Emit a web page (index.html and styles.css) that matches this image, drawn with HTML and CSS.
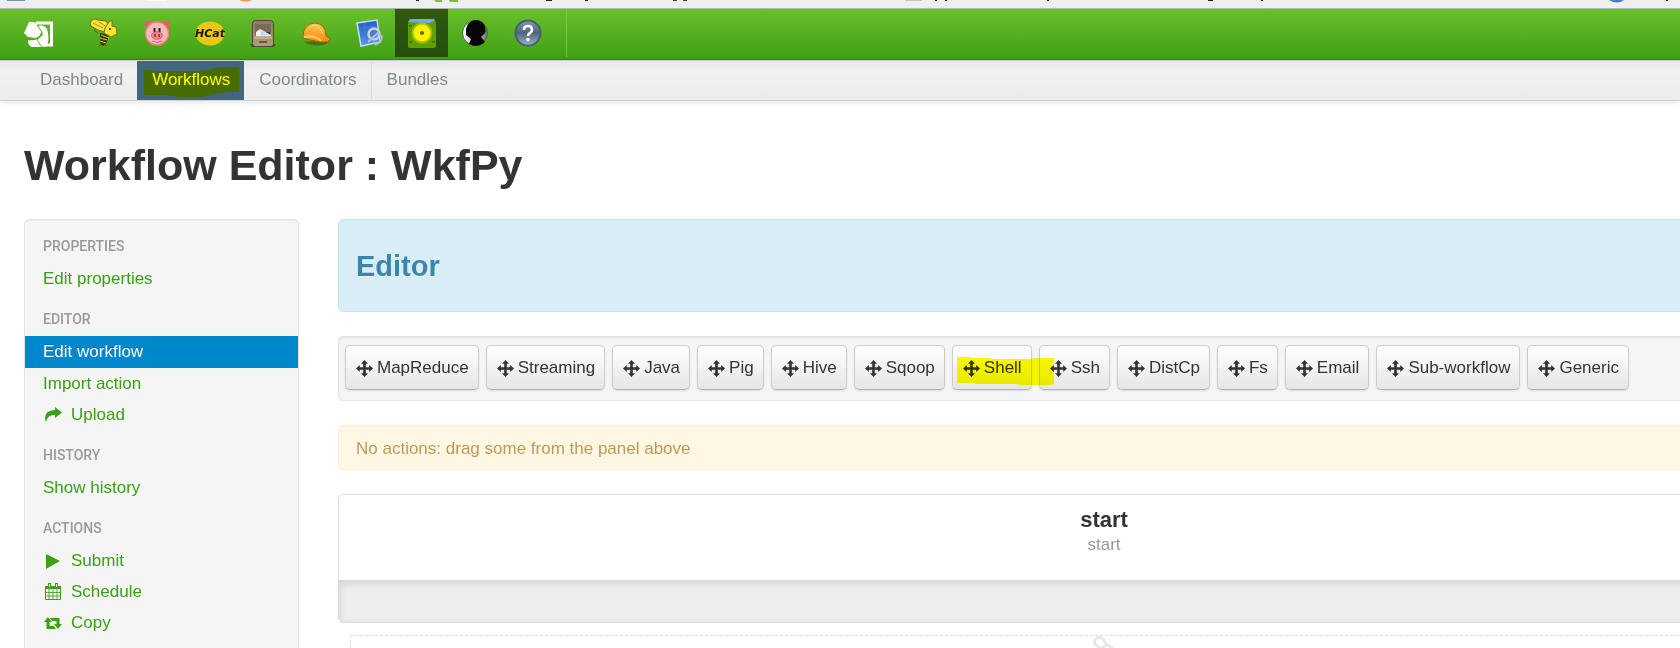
FILE: index.html
```
<!DOCTYPE html>
<html lang="en">
<head>
<meta charset="utf-8">
<title>Workflow Editor : WkfPy</title>
<link rel="stylesheet" href="styles.css">
</head>
<body>
<svg width="0" height="0" class="defs" aria-hidden="true">
  <defs>
    <linearGradient id="blue" x1="0" y1="0" x2="0" y2="1"><stop offset="0" stop-color="#1f5fc6"/><stop offset="1" stop-color="#5b97ea"/></linearGradient>
    <linearGradient id="hat" x1="0" y1="0" x2="0" y2="1"><stop offset="0" stop-color="#ffc65a"/><stop offset="1" stop-color="#f58a07"/></linearGradient>
    <linearGradient id="help" x1="0" y1="0" x2="0" y2="1"><stop offset="0" stop-color="#8797a8"/><stop offset=".5" stop-color="#4d6580"/><stop offset="1" stop-color="#9fb6c6"/></linearGradient>
    <linearGradient id="cab" x1="0" y1="0" x2="0" y2="1"><stop offset="0" stop-color="#8d7d66"/><stop offset="1" stop-color="#b09c7d"/></linearGradient>
    <linearGradient id="moon" x1="0" y1="0" x2="1" y2="0"><stop offset="0" stop-color="#fff"/><stop offset="1" stop-color="#777"/></linearGradient>
    <symbol id="move" viewBox="0 0 17 17"><path d="M8.500 0 L12 3.800 H9.800 V7.200 H13.200 V5 L17 8.500 L13.200 12 V9.800 H9.800 V13.200 H12 L8.500 17 L5 13.200 H7.200 V9.800 H3.800 V12 L0 8.500 L3.800 5 V7.200 H7.200 V3.800 H5 Z" fill="currentColor"/></symbol>
  </defs>
</svg>
<div class="browser-strip" aria-hidden="true">
  <svg width="1680" height="8" viewBox="0 0 1680 8">
    <path d="M7 0h18v1H7z" fill="#7493ad"/><path d="M148 0h19v1h-19z" fill="#fff"/><path d="M239 0h13q-6 3-13 0z" fill="#f4915c"/>
    <path d="M416 0h3v1h-3zM546 0h6v1h-6zM585 0h3v1h-3z" fill="#222"/>
    <path d="M434 0h8v2h-6zM449 0h9v2h-8z" fill="#79c043"/><path d="M673 0h4v1h-4zM683 0h4v1h-4z" fill="#444"/>
    <path d="M905 0h17v1h-17z" fill="#c4c7ca"/><path d="M935 0h2v1h-2zM945 0h2v1h-2zM1047 0h2v1h-2zM1208 0h5v1h-5zM1261 0h2v1h-2zM1666 0h2v1h-2z" fill="#222"/>
    <path d="M1609 0h15q-7 5-15 0z" fill="#4a7dbd"/>
  </svg>
</div>
<nav class="topbar" aria-label="Applications">
  <a class="brand" href="#" aria-label="Hue home">
    <svg width="30" height="28" viewBox="0 0 30 28"><path d="M12 2H27.500V24H20" fill="none" stroke="#fff" stroke-width="3"/><path d="M5 1 Q8 0 12 2 L17 10 Q17 15 12 17 L4 16 L0 12 Z" fill="#fff"/><path d="M14 5 Q20 3 23 8 Q26 17 23 25 L19 26 Q14 22 14 18 L19 14 Z" fill="#fff"/><path d="M4 19 Q10 20 13 18 Q14 23 18 26 H8 Q4 25 4 19Z" fill="#fff"/><path d="M13 4 L18 11 Q18 16 12 18 L4 17" fill="none" stroke="#58b320"/></svg>
  </a>
  <a class="app" href="#" aria-label="Hive"><svg width="30" height="30" viewBox="0 0 30 30"><path d="M11 15l9 2-2 7-4 4-3-3z" fill="#3b3308"/><path d="M11 20l7 2M11 23l6 2M12 17l8 3" stroke="#e5cb28" stroke-width="1"/><path d="M1 5Q4-1 9 2L17 3 21 8 16 14 9 12Q5 10 2 8Z" fill="#f6e338" stroke="#756916"/><path d="M16 10L20 4 23 2 23 8 27 9 28 16 22 19 15 15Z" fill="#fae62d" stroke="#7d6e12"/><path d="M4 5L14 10M10 4L18 9" stroke="#a89722"/><circle cx="21" cy="11" r="1" fill="#222"/><path d="M5 12l4 3M14 25l-4 3M16 25l1 3" stroke="#56500f"/></svg></a>
  <a class="app" href="#" aria-label="Pig"><svg width="30" height="30" viewBox="0 0 30 30"><path d="M2 3l9 1-7 7zM28 3l-9 1 7 7z" fill="#e95b65"/><circle cx="15" cy="15.500" r="11.500" fill="#f8b9ba" stroke="#ee7a80" stroke-width="1.500"/><path d="M12.500 10v4M17.500 10v4" stroke="#222" stroke-width="2"/><ellipse cx="15" cy="17.500" rx="5.500" ry="3.800" fill="#f0868c" stroke="#e05766"/><path d="M13 16v3M17 16v3" stroke="#9e2337" stroke-width="1.500"/><path d="M10 23q5 3 10 0" fill="none" stroke="#df5965"/></svg></a>
  <a class="app" href="#" aria-label="HCatalog"><svg width="30" height="30" viewBox="0 0 30 30"><ellipse cx="15" cy="15.500" rx="14.500" ry="12" fill="#e9c713"/><text x="15" y="19" class="hcat" text-anchor="middle">HCat</text></svg></a>
  <a class="app" href="#" aria-label="File Browser"><svg width="30" height="30" viewBox="0 0 30 30"><path d="M2 26h26l-2 3H4z" fill="#335c13"/><rect x="4.500" y="2.500" width="21" height="26" rx="3" fill="url(#cab)" stroke="#57493a"/><path d="M7 6h16v12H7z" fill="#7b6b56"/><path d="M8 14h14v4H8z" fill="#33291f"/><path d="M8 14l4-3 11 6v1H8z" fill="#eef2f8"/><path d="M12 12l10 5-9 1z" fill="#c4d8ee"/><path d="M6 18h18v3H6z" fill="#c0ad8e"/><path d="M11 24h8" stroke="#695944" stroke-width="2"/></svg></a>
  <a class="app" href="#" aria-label="Job Browser"><svg width="30" height="30" viewBox="0 0 30 30"><path d="M3 24q10 6 22 2l3-2-4-2z" fill="#3f7514"/><path d="M2 19Q2 6 14 5Q25 6 25 18L29 21 27 24 20 24Q11 23 2 20Z" fill="url(#hat)" stroke="#ad6008"/><path d="M3 19Q15 17 20 23" fill="none" stroke="#ffce69" stroke-width="2"/><path d="M9 8q8-4 13 8" fill="none" stroke="#ffdf92" stroke-width="1"/></svg></a>
  <a class="app" href="#" aria-label="Job Designer"><svg width="30" height="30" viewBox="0 0 30 30"><path d="M3 5L23 2 26 24 7 28Z" fill="url(#blue)" stroke="#c9dcf5" stroke-width="1.500"/><path d="M5 11l16-3M6 17l17-3M10 5l3 20" stroke="#3f78cf" stroke-width="1"/><circle cx="20" cy="16" r="5.500" fill="#4e7fd0" stroke="#c3d2e6" stroke-width="2.500"/><path d="M14 24L24 15l4 4-2 5-5 3" fill="none" stroke="#acc0d7" stroke-width="2"/></svg></a>
  <a class="app app-active" href="#" aria-label="Oozie Editor" aria-current="page"><svg width="30" height="30" viewBox="0 0 30 30"><rect x="1" y="3" width="28" height="27" rx="2" fill="#5da000"/><path d="M3 1h24l1 2-6 2-21-1z" fill="#76a9ec"/><path d="M2 8h3M2 24h3M25 24h3" stroke="#467a00" stroke-width="2"/><circle cx="15" cy="15" r="9.500" fill="#fff200" stroke="#a2bf00" stroke-width="2"/><circle cx="15" cy="15" r="2" fill="#526b00"/></svg></a>
  <a class="app" href="#" aria-label="ZooKeeper"><svg width="30" height="30" viewBox="0 0 30 30"><circle cx="15" cy="15" r="12.500" fill="url(#moon)" stroke="#496341" stroke-width="1"/><path d="M8 6Q15-1 22 4Q27 9 25 15L21 19 25 24Q17 31 9 26L11 21 6 17 6 11Z" fill="#050505"/></svg></a>
  <a class="app" href="#" aria-label="Help"><svg width="30" height="30" viewBox="0 0 30 30"><circle cx="15" cy="15" r="12.500" fill="url(#help)" stroke="#456078" stroke-width="2"/><path d="M11 12q0-4 4-4t4 4q0 2-2 3t-2 3" fill="none" stroke="#fff" stroke-width="2.600"/><circle cx="15" cy="21.500" r="1.700" fill="#fff"/></svg></a>
  <span class="topbar-end"></span>
</nav>
<nav class="subnav" aria-label="Oozie">
  <a class="tab" href="#">Dashboard</a>
  <a class="tab tab-active" href="#" aria-current="page"><svg class="marker" viewBox="0 0 95 28" preserveAspectRatio="none" aria-hidden="true"><path d="M0 0H10V1H52L64 0 75-3H95V22H84L72 24 58 27H35L22 25H0Z" fill="#466c00"/></svg><span class="tab-text">Workflows</span></a>
  <a class="tab" href="#">Coordinators</a>
  <a class="tab tab-divided" href="#">Bundles</a>
</nav>
<div class="page">
  <h1 class="title">Workflow Editor : WkfPy</h1>
  <div class="columns">
    <aside class="sidebar">
      <h2 class="group">PROPERTIES</h2>
      <a class="item" href="#">Edit properties</a>
      <h2 class="group">EDITOR</h2>
      <a class="item item-active" href="#" aria-current="page">Edit workflow</a>
      <a class="item" href="#">Import action</a>
      <a class="item" href="#"><svg class="glyph" width="18" height="18" viewBox="0 0 18 18"><path d="M11 1l7 5.500-7 5.500V9Q4 8 2 16Q-2 5 11 4Z" fill="currentColor"/></svg>Upload</a>
      <h2 class="group">HISTORY</h2>
      <a class="item" href="#">Show history</a>
      <h2 class="group">ACTIONS</h2>
      <a class="item" href="#"><svg class="glyph" width="18" height="18" viewBox="0 0 18 18"><path d="M2 2L16 9 2 17Z" fill="currentColor"/></svg>Submit</a>
      <a class="item" href="#"><svg class="glyph" width="18" height="18" viewBox="0 0 18 18"><path d="M1.500 3.500h15v13h-15z" fill="none" stroke="currentColor"/><path d="M1 3h16v3H1zM4 0h3v5H4zM11 0h3v5h-3z" fill="currentColor"/><path d="M1 9.500h16M1 13h16M5 6v11M9 6v11M13 6v11" stroke="currentColor" stroke-width=".8"/><path d="M5.500 1v3M12.500 1v3" stroke="#f5f5f5"/></svg>Schedule</a>
      <a class="item" href="#"><svg class="glyph" width="18" height="18" viewBox="0 0 18 18"><path d="M4 3L8 8H5.500V12H10L12 15H2.500V8H0ZM6 4H15.500V10H18L14 15 10 10H12.500V7H8Z" fill="currentColor"/></svg>Copy</a>
    </aside>
    <main class="main">
      <section class="alert alert-info"><h2 class="alert-title">Editor</h2></section>
      <section class="toolbar" aria-label="Actions">
        <button class="btn" type="button"><svg width="17" height="17"><use href="#move"/></svg>MapReduce</button>
        <button class="btn" type="button"><svg width="17" height="17"><use href="#move"/></svg>Streaming</button>
        <button class="btn" type="button"><svg width="17" height="17"><use href="#move"/></svg>Java</button>
        <button class="btn" type="button"><svg width="17" height="17"><use href="#move"/></svg>Pig</button>
        <button class="btn" type="button"><svg width="17" height="17"><use href="#move"/></svg>Hive</button>
        <button class="btn" type="button"><svg width="17" height="17"><use href="#move"/></svg>Sqoop</button>
        <button class="btn btn-marked" type="button"><svg width="17" height="17"><use href="#move"/></svg>Shell<svg class="highlight" width="98" height="29" viewBox="0 0 98 29" aria-hidden="true"><path d="M0 0H13V1H34V2H76V1H97V27L93 28H61V27H18V26H0Z" fill="#ff0"/></svg></button>
        <button class="btn" type="button"><svg width="17" height="17"><use href="#move"/></svg>Ssh</button>
        <button class="btn" type="button"><svg width="17" height="17"><use href="#move"/></svg>DistCp</button>
        <button class="btn" type="button"><svg width="17" height="17"><use href="#move"/></svg>Fs</button>
        <button class="btn" type="button"><svg width="17" height="17"><use href="#move"/></svg>Email</button>
        <button class="btn" type="button"><svg width="17" height="17"><use href="#move"/></svg>Sub-workflow</button>
        <button class="btn" type="button"><svg width="17" height="17"><use href="#move"/></svg>Generic</button>
      </section>
      <p class="alert alert-warning">No actions: drag some from the panel above</p>
      <section class="node">
        <div class="node-head"><h3 class="node-name">start</h3><p class="node-type">start</p></div>
        <div class="node-foot"></div>
      </section>
      <div class="dropzone"><svg width="24" height="24" viewBox="0 0 24 24"><g fill="none" stroke="#e8e8e8" stroke-width="3"><rect x="3" y="2" width="11" height="9" rx="4" transform="rotate(40 8 6)"/><rect x="11" y="10" width="11" height="9" rx="4" transform="rotate(40 16 14)"/></g></svg></div>
    </main>
  </div>
</div>
</body>
</html>
```

FILE: styles.css
```
* { box-sizing: border-box; }
html { overflow: hidden; }
body {
  margin: 0;
  overflow: hidden;
  background: #fff;
  color: #333;
  font: 17px/24px "Liberation Sans", Arial, sans-serif;
}
a { text-decoration: none; }
h1, h2, h3, p { margin: 0; }
.defs { position: absolute; }

.browser-strip { height: 9px; background: #efefef; border-bottom: 1px solid #b5b5b5; overflow: hidden; }
.browser-strip svg { display: block; }

.topbar {
  display: flex;
  height: 51px;
  padding-left: 24px;
  background: linear-gradient(#6abf2a, #40a014);
  border-bottom: 1px solid #388a12;
}
.brand { width: 53px; padding-top: 12px; }
.app { width: 53px; height: 48px; padding-top: 9px; text-align: center; }
.brand svg, .app svg { display: inline-block; vertical-align: top; }
.app-active { background: linear-gradient(#30580f, #234f0b); }
.topbar-end { width: 13px; height: 48px; border-right: 1px solid #77c93f; }
.hcat { font: italic bold 11px "DejaVu Sans", sans-serif; fill: #1c1703; }

.subnav {
  display: flex;
  height: 41px;
  padding-left: 25px;
  border-top: 1px solid #d0d0d0;
  border-bottom: 1px solid #d0d0d0;
  background: linear-gradient(#e6e6e6, #f1f1f1 10px, #ececec);
  box-shadow: 0 1px 6px rgba(0, 0, 0, .12);
}
.tab { position: relative; padding: 7px 14px 0 15px; color: #7f8a8c; }
.tab-active { background: #42667f; color: #ff0; }
.tab-text { position: relative; }
.tab-divided { border-left: 1px solid #ddd; }
.marker { position: absolute; left: 7px; top: 9px; width: calc(100% - 12px); height: 28px; overflow: visible; }

.page { padding: 37px 24px 0; }
.title { font-size: 43px; line-height: 54px; font-weight: bold; }
/* The editor column is wider than the window and is cut at its right edge. */
.columns { display: flex; align-items: flex-start; gap: 39px; margin: 27px -214px 0 0; }

.sidebar {
  flex: none;
  width: 275px;
  padding: 1px 0 20px;
  background: #f5f5f5;
  border: 1px solid #e3e3e3;
  border-radius: 5px;
  box-shadow: inset 0 1px 1px rgba(0, 0, 0, .05);
}
.group {
  padding: 14px 18px 6px;
  color: #999;
  font: 500 14px/22px Roboto, sans-serif;
}
.item { display: flex; align-items: center; height: 31px; padding: 0 18px; color: #3aa014; }
.item-active { height: 32px; background: #08c; color: #fff; text-shadow: 0 -1px 0 rgba(0, 0, 0, .2); }
.glyph { margin: 0 9px 0 1px; }

.main { flex: 1; min-width: 0; }
.alert { border: 1px solid; border-radius: 5px; text-shadow: 0 1px 0 rgba(255, 255, 255, .5); }
.alert-info { padding: 21px 17px 19px; background: #d9edf7; border-color: #bce8f1; color: #3a87ad; }
.alert-title { font-size: 29px; line-height: 51px; }
.alert-warning { margin-top: 24px; padding: 11px 17px 9px; background: #fef7e3; border-color: #fbeed5; color: #c09853; line-height: 23px; }

.toolbar {
  display: flex;
  gap: 7px;
  margin-top: 24px;
  padding: 8px 6px 10px;
  background: #f5f5f5;
  border: 1px solid #e3e3e3;
  border-radius: 5px;
  box-shadow: inset 0 1px 2px rgba(0, 0, 0, .08);
}
.btn {
  display: flex;
  align-items: center;
  gap: 4px;
  height: 45px;
  padding: 1px 9px 0 10px;
  border: 1px solid #ccc;
  border-bottom-color: #b3b3b3;
  border-radius: 5px;
  background: linear-gradient(#fff, #e6e6e6);
  box-shadow: 0 1px 2px rgba(0, 0, 0, .1);
  color: #333;
  font: inherit;
  white-space: nowrap;
}
.btn-marked { position: relative; }
.highlight { position: absolute; left: 4px; top: 11px; mix-blend-mode: multiply; }

.node { margin-top: 24px; border: 1px solid #ddd; border-radius: 5px; overflow: hidden; }
.node-head { height: 85px; padding-top: 12px; text-align: center; }
.node-name { font-size: 22px; line-height: 26px; }
.node-type { color: #999; line-height: 24px; }
.node-foot { height: 42px; background: #eee; box-shadow: inset 0 3px 8px rgba(0, 0, 0, .12); }
.dropzone { display: flex; justify-content: center; height: 60px; margin: 12px 12px 0; border: 1px dashed #ddd; }
```
